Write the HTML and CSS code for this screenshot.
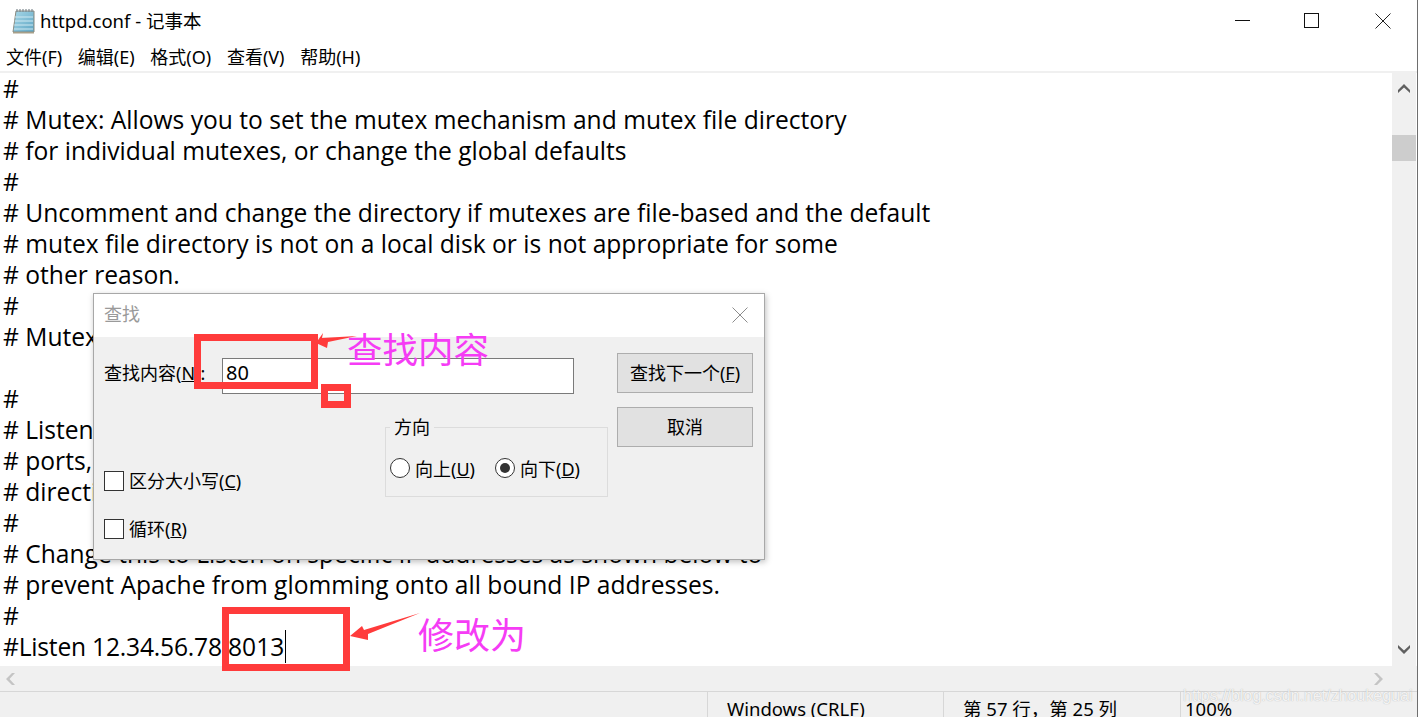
FILE: index.html
```html
<!DOCTYPE html>
<html lang="zh">
<head>
<meta charset="utf-8">
<title>httpd.conf - 记事本</title>
<link rel="stylesheet" href="styles.css">
</head>
<body>
<div class="window">
  <header class="titlebar">
    <svg class="app-icon" width="24" height="26" viewBox="0 0 24 26">
      <defs><linearGradient id="pad" x1="0" y1="0" x2="1" y2="1"><stop offset="0" stop-color="#a8d8e8"/><stop offset="1" stop-color="#5fa6c4"/></linearGradient></defs>
      <path d="M5 3H23V24H2Z" fill="url(#pad)" stroke="#8a8a80"/>
      <path d="M4 9H22M3.6 13H22M3.2 17H22M2.8 21H22" stroke="#cfe9f2" stroke-width="1"/>
      <path d="M6 1V4M9 1V4M12 1V4M15 1V4M18 1V4M21 1V4" stroke="#7f8a90" stroke-width="1.2"/>
      <path d="M2 24H23V25.500H2Z" fill="#a89f88"/>
    </svg>
    <span class="title">httpd.conf - 记事本</span>
    <div class="controls">
      <svg width="16" height="16" viewBox="0 0 16 16"><path d="M0 7.500H15" stroke="#111" stroke-width="1"/></svg>
      <svg width="16" height="16" viewBox="0 0 16 16"><rect x="0.500" y="0.500" width="14" height="14" fill="none" stroke="#111"/></svg>
      <svg width="16" height="16" viewBox="0 0 16 16"><path d="M0.500 0.500L15.500 15.500M15.500 0.500L0.500 15.500" stroke="#222" stroke-width="1"/></svg>
    </div>
  </header>
  <nav class="menubar">
    <span>文件(F)</span><span>编辑(E)</span><span>格式(O)</span><span>查看(V)</span><span>帮助(H)</span>
  </nav>
  <div class="workspace">
    <main class="editor">
      <div class="line">#</div>
      <div class="line"># Mutex: Allows you to set the mutex mechanism and mutex file directory</div>
      <div class="line"># for individual mutexes, or change the global defaults</div>
      <div class="line">#</div>
      <div class="line"># Uncomment and change the directory if mutexes are file-based and the default</div>
      <div class="line"># mutex file directory is not on a local disk or is not appropriate for some</div>
      <div class="line"># other reason.</div>
      <div class="line">#</div>
      <div class="line"># Mutex default:logs</div>
      <div class="line">&nbsp;</div>
      <div class="line">#</div>
      <div class="line"># Listen: Allows you to bind Apache to specific IP addresses and/or</div>
      <div class="line"># ports, instead of the default. See also the &lt;VirtualHost&gt;</div>
      <div class="line"># directive.</div>
      <div class="line">#</div>
      <div class="line"># Change this to Listen on specific IP addresses as shown below to</div>
      <div class="line"># prevent Apache from glomming onto all bound IP addresses.</div>
      <div class="line">#</div>
      <div class="line line-last">#Listen 12.34.56.78:<span class="caret">8013</span></div>
    </main>
    <aside class="vscroll">
      <svg width="12" height="9" viewBox="0 0 12 9"><path d="M0 6L6 0L12 6V9L6 3.500L0 9Z" fill="#606060"/></svg>
      <div class="thumb"></div>
      <svg class="down" width="12" height="9" viewBox="0 0 12 9"><path d="M0 0L6 5.500L12 0V3L6 9L0 3Z" fill="#606060"/></svg>
    </aside>
  </div>
  <div class="hscroll">
    <svg width="10" height="12" viewBox="0 0 10 12"><path d="M6 0H9L3.500 6L9 12H6L0 6Z" fill="#c4c4c4"/></svg>
    <svg width="10" height="12" viewBox="0 0 10 12"><path d="M1 0H4L10 6L4 12H1L6.500 6Z" fill="#c4c4c4"/></svg>
  </div>
  <footer class="statusbar">
    <div class="cell cell-enc">Windows (CRLF)</div>
    <div class="cell cell-pos">第 57 行，第 25 列</div>
    <div class="cell cell-zoom">100%</div>
  </footer>
</div>

<section class="dialog">
  <div class="dlg-title">
    <span>查找</span>
    <svg width="16" height="16" viewBox="0 0 16 16"><path d="M0.500 0.500L15.500 15.500M15.500 0.500L0.500 15.500" stroke="#8c8c8c" stroke-width="1"/></svg>
  </div>
  <div class="dlg-body">
    <div class="dlg-main">
      <div class="find-row">
        <label>查找内容(<u>N</u>):</label>
        <div class="input">80</div>
      </div>
      <div class="options">
        <div class="checks">
          <div class="check"><i class="box"></i><span>区分大小写(<u>C</u>)</span></div>
          <div class="check"><i class="box"></i><span>循环(<u>R</u>)</span></div>
        </div>
        <div class="group">
          <div class="legend">方向</div>
          <div class="radios">
            <div class="radio"><i class="dot"></i><span>向上(<u>U</u>)</span></div>
            <div class="radio"><i class="dot on"></i><span>向下(<u>D</u>)</span></div>
          </div>
        </div>
      </div>
    </div>
    <div class="dlg-buttons">
      <div class="btn">查找下一个(<u>F</u>)</div>
      <div class="btn">取消</div>
    </div>
  </div>
</section>

<div class="mark mark-a"></div>
<div class="mark mark-b"></div>
<div class="mark mark-c"></div>
<svg class="arrows" width="1419" height="717" viewBox="0 0 1419 717">
  <path d="M316 343L323 333L322 338L357 336L328 342L327 348Z" fill="#ff3b3b"/>
  <path d="M350 636L362 626L364 630L420 613L368 634L368 640Z" fill="#ff3b3b"/>
</svg>
<div class="note note-a">查找内容</div>
<div class="note note-b">修改为</div>
<div class="watermark">https://blog.csdn.net/zhoukeguai</div>
</body>
</html>
```
FILE: styles.css
```css
* { box-sizing: border-box; }
html, body { margin: 0; padding: 0; height: 717px; overflow: hidden; background: #fff; }
body { position: relative; width: 1419px; font-family: "Open Sans", "Noto Sans CJK SC", sans-serif; color: #000; }

.window { width: 1418px; height: 717px; border-right: 1px solid #6e6e6e; display: flex; flex-direction: column; background: #fff; }

.titlebar { height: 41px; display: flex; align-items: center; padding-left: 11px; flex: none; }
.title { margin-left: 5px; font-size: 18.500px; font-family: "Noto Sans", "Noto Sans CJK SC", sans-serif; line-height: 41px; }
.controls { margin-left: auto; display: flex; gap: 53px; padding-right: 26px; }
.controls svg { display: block; }
.controls svg:last-child { margin-left: 2px; }

.menubar { height: 30px; flex: none; display: flex; gap: 15.700px; padding-left: 6px; padding-top: 2px; font-size: 18px; line-height: 28px; font-family: "Noto Sans", "Noto Sans CJK SC", sans-serif; }
.menubar span { white-space: nowrap; }

.workspace { margin-top: 2px; height: 593px; flex: none; display: flex; position: relative; }
.workspace::before { content: ""; position: absolute; left: 0; right: 0; top: -2px; height: 2px; background: #f0f0f0; }

.editor { flex: 1; padding-left: 3px; font-size: 24.600px; line-height: 31px; overflow: hidden; white-space: nowrap; }
.line { height: 31px; }
.line-last { letter-spacing: -0.200px; }
.caret { border-right: 1px solid #000; padding-right: 1px; letter-spacing: 0; }

.vscroll { width: 24px; margin-right: 1px; background: #f0f0f0; display: flex; flex-direction: column; align-items: center; padding-top: 11px; }
.vscroll svg { display: block; flex: none; }
.thumb { width: 24px; height: 26px; background: #cdcdcd; margin-top: 42px; flex: none; }
.vscroll .down { margin-top: auto; margin-bottom: 12px; }

.hscroll { height: 26px; flex: none; background: #f0f0f0; border-bottom: 1px solid #d7d7d7; display: flex; justify-content: space-between; align-items: center; padding: 0 34px 0 6px; }

.statusbar { flex: 1; background: #f0f0f0; display: flex; overflow: hidden; font-size: 18.500px; line-height: 33px; font-family: "Noto Sans", "Noto Sans CJK SC", sans-serif; padding-left: 707px; }
.cell { border-left: 1px solid #d7d7d7; white-space: nowrap; height: 33px; }
.cell-enc { width: 236px; padding-left: 19px; }
.cell-pos { width: 237px; padding-left: 19px; }
.cell-zoom { padding-left: 4px; }

.dialog { position: absolute; left: 93px; top: 293px; width: 672px; height: 267px; background: #f0f0f0; border: 1px solid #a8a8a8; box-shadow: 1px 2px 6px rgba(0,0,0,.25); font-family: "Noto Sans", "Noto Sans CJK SC", sans-serif; font-size: 18px; }
.dlg-title { height: 43px; background: #fff; display: flex; align-items: center; justify-content: space-between; padding: 0 16px 6px 10px; color: #9a9a9a; }
.dlg-title svg { margin-top: 5px; }
.dlg-body { display: flex; padding: 16px 10px 0; }
.dlg-main { width: 513px; flex: none; }
.find-row { display: flex; align-items: center; margin-top: 5px; height: 36px; }
.find-row label { width: 118px; flex: none; white-space: nowrap; line-height: 30px; margin-top: -6px; }
.input { width: 352px; height: 36px; border: 1px solid #7a7a7a; background: #fff; padding-left: 3px; font-size: 20px; line-height: 28px; }
.options { display: flex; }
.checks { width: 281px; flex: none; padding-top: 77px; display: flex; flex-direction: column; gap: 28px; }
.check { display: flex; align-items: center; height: 20px; gap: 5px; white-space: nowrap; }
.check span { margin-top: -2px; }
.box { width: 20px; height: 20px; border: 1px solid #333; background: #fff; display: block; flex: none; }
.group { width: 223px; height: 70px; margin-top: 33px; border: 1px solid #dcdcdc; padding-left: 4px; }
.legend { width: fit-content; margin: -12px 0 0 0; padding: 0 4px; line-height: 22px; background: #f0f0f0; }
.radios { display: flex; gap: 20px; margin-top: 20px; }
.radio { display: flex; align-items: center; gap: 5px; height: 20px; white-space: nowrap; }
.dot { width: 20px; height: 20px; border-radius: 50%; border: 1px solid #333; background: #fff; display: flex; align-items: center; justify-content: center; flex: none; }
.dot.on::after { content: ""; width: 10px; height: 10px; border-radius: 50%; background: #333; }
.dlg-buttons { display: flex; flex-direction: column; gap: 14px; }
.btn { width: 136px; height: 40px; background: #e1e1e1; border: 1px solid #adadad; text-align: center; line-height: 38px; white-space: nowrap; }

.mark { position: absolute; border: 7px solid #ff3b3b; }
.mark-a { left: 194px; top: 334px; width: 124px; height: 55px; }
.mark-b { left: 321px; top: 384px; width: 30px; height: 24px; }
.mark-c { left: 222px; top: 607px; width: 128px; height: 64px; }
.arrows { position: absolute; left: 0; top: 0; pointer-events: none; }
.note { position: absolute; color: #f53cf5; font-family: "Noto Sans CJK SC", sans-serif; line-height: 40px; white-space: nowrap; }
.note-a { left: 347px; top: 328px; font-size: 35.500px; }
.note-b { left: 418px; top: 613px; font-size: 36px; }
.watermark { position: absolute; left: 1183px; top: 686px; font-family: "Liberation Sans", sans-serif; font-size: 16px; line-height: 20px; color: rgba(255,255,255,.85); text-shadow: 0 0 1px rgba(120,120,120,.6); white-space: nowrap; }
```
